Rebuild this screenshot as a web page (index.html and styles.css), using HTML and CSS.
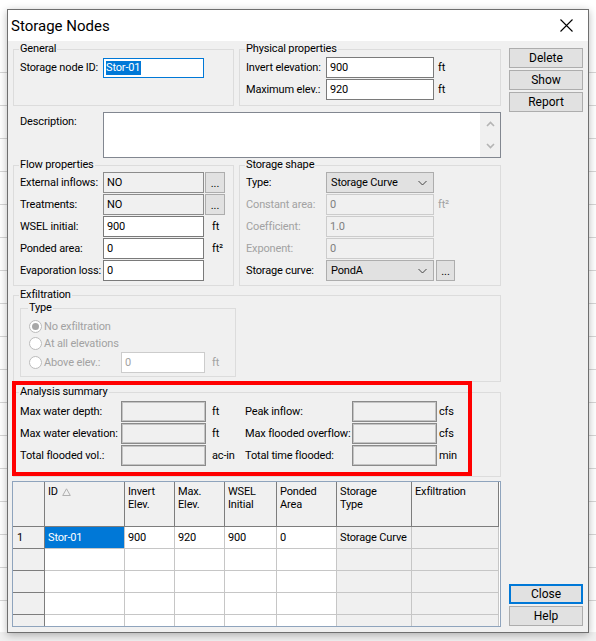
FILE: index.html
```html
<!DOCTYPE html>
<html lang="en">
<head>
<meta charset="utf-8">
<title>Storage Nodes</title>
<link rel="stylesheet" href="styles.css">
</head>
<body>
<div class="desktop">
  <div class="window">
    <div class="titlebar">
      <span class="title">Storage Nodes</span>
      <svg class="close-x" width="13" height="13" viewBox="0 0 13 13" aria-hidden="true">
        <path d="M0.5 0.5L12.5 12.5M12.5 0.5L0.5 12.5" stroke="#000" stroke-width="1.1" fill="none"/>
      </svg>
    </div>

    <div class="dialog">
      <div class="main">

        <div class="row-pair top-pair">
          <fieldset class="group general">
            <legend>General</legend>
            <div class="fields cols-general">
              <span class="lbl">Storage node ID:</span>
              <div class="edit focused"><span class="sel">Stor-01</span></div>
            </div>
          </fieldset>
          <fieldset class="group physical">
            <legend>Physical properties</legend>
            <div class="fields cols-physical">
              <span class="lbl">Invert elevation:</span>
              <div class="edit">900</div>
              <span class="unit">ft</span>
              <span class="lbl">Maximum elev.:</span>
              <div class="edit">920</div>
              <span class="unit">ft</span>
            </div>
          </fieldset>
        </div>

        <div class="desc-row">
          <span class="lbl desc-lbl">Description:</span>
          <div class="memo">
            <div class="memo-text"></div>
            <div class="memo-scroll">
              <svg width="9" height="6" viewBox="0 0 9 6" aria-hidden="true"><path d="M1 5L4.5 1.5L8 5" stroke="#b4b4b4" stroke-width="1.6" fill="none"/></svg>
              <svg width="9" height="6" viewBox="0 0 9 6" aria-hidden="true"><path d="M1 1L4.5 4.5L8 1" stroke="#b4b4b4" stroke-width="1.6" fill="none"/></svg>
            </div>
          </div>
        </div>

        <div class="row-pair mid-pair">
          <fieldset class="group flow">
            <legend>Flow properties</legend>
            <div class="fields cols-flow">
              <span class="lbl">External inflows:</span>
              <div class="edit readonly">NO</div>
              <div class="dots flow-dots">...</div>

              <span class="lbl">Treatments:</span>
              <div class="edit readonly">NO</div>
              <div class="dots flow-dots">...</div>

              <span class="lbl">WSEL initial:</span>
              <div class="edit">900</div>
              <span class="unit flow-unit">ft</span>

              <span class="lbl">Ponded area:</span>
              <div class="edit">0</div>
              <span class="unit flow-unit">ft²</span>

              <span class="lbl">Evaporation loss:</span>
              <div class="edit">0</div>
              <span></span>
            </div>
          </fieldset>

          <fieldset class="group shape">
            <legend>Storage shape</legend>
            <div class="fields cols-shape">
              <span class="lbl">Type:</span>
              <div class="combo">
                <span>Storage Curve</span>
                <svg width="9" height="6" viewBox="0 0 9 6" aria-hidden="true"><path d="M0.5 1L4.5 5L8.5 1" stroke="#444" stroke-width="1" fill="none"/></svg>
              </div>
              <span></span>

              <span class="lbl dis">Constant area:</span>
              <div class="edit disabled">0</div>
              <span class="unit shape-unit dis">ft²</span>

              <span class="lbl dis">Coefficient:</span>
              <div class="edit disabled">1.0</div>
              <span></span>

              <span class="lbl dis">Exponent:</span>
              <div class="edit disabled">0</div>
              <span></span>

              <span class="lbl">Storage curve:</span>
              <div class="combo">
                <span>PondA</span>
                <svg width="9" height="6" viewBox="0 0 9 6" aria-hidden="true"><path d="M0.5 1L4.5 5L8.5 1" stroke="#444" stroke-width="1" fill="none"/></svg>
              </div>
              <div class="dots shape-dots">...</div>
            </div>
          </fieldset>
        </div>

        <fieldset class="group exfil">
          <legend>Exfiltration</legend>
          <fieldset class="group type">
            <legend>Type</legend>
            <div class="cols-type">
              <div class="radio dis"><span class="dot checked"></span>No exfiltration</div>
              <span></span><span></span>
              <div class="radio dis"><span class="dot"></span>At all elevations</div>
              <span></span><span></span>
              <div class="radio dis"><span class="dot"></span>Above elev.:</div>
              <div class="edit inactive">0</div>
              <span class="unit type-unit dis">ft</span>
            </div>
          </fieldset>
        </fieldset>

        <div class="summary-wrap">
          <fieldset class="group summary">
            <legend>Analysis summary</legend>
            <div class="fields cols-summary">
              <span class="lbl">Max water depth:</span>
              <div class="edit result"></div>
              <span class="unit sum-unit">ft</span>
              <span class="lbl">Peak inflow:</span>
              <div class="edit result"></div>
              <span class="unit sum-unit-r">cfs</span>

              <span class="lbl">Max water elevation:</span>
              <div class="edit result"></div>
              <span class="unit sum-unit">ft</span>
              <span class="lbl">Max flooded overflow:</span>
              <div class="edit result"></div>
              <span class="unit sum-unit-r">cfs</span>

              <span class="lbl">Total flooded vol.:</span>
              <div class="edit result"></div>
              <span class="unit sum-unit">ac-in</span>
              <span class="lbl">Total time flooded:</span>
              <div class="edit result"></div>
              <span class="unit sum-unit-r">min</span>
            </div>
          </fieldset>
          <div class="highlight-box"></div>
        </div>

        <div class="grid">
          <div class="gh"></div>
          <div class="gh">ID <svg class="sort" width="9" height="8" viewBox="0 0 9 8" aria-hidden="true"><path d="M4.5 0.8L8.3 7.5H0.7Z" stroke="#b0b0b0" stroke-width="1" fill="none"/></svg></div>
          <div class="gh">Invert<br>Elev.</div>
          <div class="gh">Max.<br>Elev.</div>
          <div class="gh">WSEL<br>Initial</div>
          <div class="gh">Ponded<br>Area</div>
          <div class="gh">Storage<br>Type</div>
          <div class="gh">Exfiltration</div>

          <div class="rh">1</div>
          <div class="gc current">Stor-01</div>
          <div class="gc">900</div>
          <div class="gc">920</div>
          <div class="gc">900</div>
          <div class="gc">0</div>
          <div class="gc ro">Storage Curve</div>
          <div class="gc ro"></div>

          <div class="rh"></div><div class="gc"></div><div class="gc"></div><div class="gc"></div><div class="gc"></div><div class="gc"></div><div class="gc ro"></div><div class="gc ro"></div>
          <div class="rh"></div><div class="gc"></div><div class="gc"></div><div class="gc"></div><div class="gc"></div><div class="gc"></div><div class="gc ro"></div><div class="gc ro"></div>
          <div class="rh"></div><div class="gc"></div><div class="gc"></div><div class="gc"></div><div class="gc"></div><div class="gc"></div><div class="gc ro"></div><div class="gc ro"></div>
          <div class="rh"></div><div class="gc"></div><div class="gc"></div><div class="gc"></div><div class="gc"></div><div class="gc"></div><div class="gc ro"></div><div class="gc ro"></div>
        </div>
      </div>

      <div class="side">
        <div class="btn-stack">
          <div class="btn">Delete</div>
          <div class="btn">Show</div>
          <div class="btn">Report</div>
        </div>
        <div class="btn-stack">
          <div class="btn default">Close</div>
          <div class="btn">Help</div>
        </div>
      </div>
    </div>
  </div>
</div>
</body>
</html>
```

FILE: styles.css
```css
* {
  box-sizing: border-box;
}

html,
body {
  margin: 0;
  padding: 0;
}

body {
  width: 596px;
  height: 641px;
  overflow: hidden;
  font-family: Roboto, "Liberation Sans", sans-serif;
  font-size: 11px;
  letter-spacing: -0.15px;
  color: #000;
}

/* application window behind the dialog */
.desktop {
  position: relative;
  width: 596px;
  height: 641px;
  background:
    linear-gradient(#f0f0f0, #f0f0f0) 0 632px / 100% 9px no-repeat,
    repeating-linear-gradient(180deg, #fff 0, #fff 32px, #d6d6d6 32px, #d6d6d6 33px) 0 40px / 100% 592px no-repeat,
    #fff;
}

.window {
  position: absolute;
  left: 7px;
  top: 9px;
  width: 582px;
  height: 624px;
  border: 1px solid #6f6f6f;
  background: #f0f0f0;
  box-shadow: 0 2px 8px rgba(0, 0, 0, 0.28);
  display: flex;
  flex-direction: column;
}

.titlebar {
  flex: none;
  height: 31px;
  background: #fff;
  display: flex;
  align-items: center;
  justify-content: space-between;
  padding: 0 15px 0 3px;
}

.title {
  font-size: 15px;
  letter-spacing: 0;
}

.dialog {
  flex: 1;
  display: grid;
  grid-template-columns: 488px 74px;
  column-gap: 8px;
  padding: 1px 5px 5px 5px;
}

.main {
  display: flex;
  flex-direction: column;
  min-width: 0;
}

/* group boxes */
.group {
  margin: 0;
  min-width: 0;
  border: 1px solid #dcdcdc;
  padding: 0 6px 4px 6px;
}

.group > legend {
  padding: 0 1px;
  margin-left: -1px;
  line-height: 14px;
}

.row-pair {
  display: flex;
  gap: 5px;
}

.general,
.flow {
  width: 221px;
}

.physical,
.shape {
  width: 262px;
}

.top-pair .group {
  padding-bottom: 5px;
}

.fields {
  display: grid;
  grid-auto-rows: 21px;
  row-gap: 1px;
  align-items: center;
}

.cols-general {
  grid-template-columns: 83px 101px;
  padding-top: 1px;
}

.cols-general .edit {
  height: 20px;
  align-self: end;
}

.cols-physical {
  grid-template-columns: 80px 108px auto;
  padding-top: 1px;
}

.cols-flow {
  grid-template-columns: 83px 101px auto;
}

.cols-shape {
  grid-template-columns: 80px 108px auto;
}

.lbl {
  white-space: nowrap;
}

.dis {
  color: #a2a2a2;
}

/* edit boxes */
.edit {
  height: 21px;
  border: 1px solid #7a7a7a;
  background: #fff;
  padding: 0 3px;
  line-height: 19px;
  white-space: nowrap;
  overflow: hidden;
}

.edit.focused {
  border-color: #0078d7;
  padding-left: 2px;
  line-height: 18px;
}

.sel {
  background: #0078d7;
  color: #fff;
  display: inline-block;
  line-height: 14px;
  padding: 0 1px 0 0;
}

.edit.readonly {
  background: #f0f0f0;
  border-color: #8c8c8c;
}

.edit.disabled {
  background: #f0f0f0;
  border-color: #cccccc;
  color: #808080;
}

.edit.inactive {
  background: #fff;
  border-color: #cccccc;
  color: #a2a2a2;
}

.edit.result {
  background: #f0f0f0;
  border-color: #8a8a8a;
  box-shadow: inset 0 0 0 1px #c4c4c4;
}

.unit {
  white-space: nowrap;
  padding-left: 4px;
}

.flow-unit {
  padding-left: 8px;
}

.dots {
  height: 21px;
  border: 1px solid #adadad;
  background: #e1e1e1;
  text-align: center;
  line-height: 22px;
  letter-spacing: 0;
}

.flow-dots {
  width: 20px;
  margin-left: 1px;
}

.shape-dots {
  width: 19px;
  margin-left: 2px;
}

.combo {
  height: 21px;
  border: 1px solid #adadad;
  background: #e1e1e1;
  display: flex;
  align-items: center;
  justify-content: space-between;
  padding: 0 6px 0 4px;
}

/* description memo */
.desc-row {
  display: flex;
  margin-top: 6px;
  padding-left: 7px;
  height: 46px;
}

.desc-lbl {
  width: 83px;
  flex: none;
  padding-top: 3px;
}

.memo {
  flex: 1;
  border: 1px solid #828790;
  background: #fff;
  display: flex;
}

.memo-text {
  flex: 1;
}

.memo-scroll {
  width: 20px;
  background: #f0f0f0;
  display: flex;
  flex-direction: column;
  align-items: center;
  justify-content: space-around;
}

.memo-scroll svg {
  display: block;
}

/* exfiltration */
.exfil {
  margin-top: 3px;
  padding-bottom: 4px;
}

.exfil > legend {
  line-height: 12px;
}

.type {
  width: 216px;
  padding: 3px 8px 3px 8px;
}

.cols-type {
  display: grid;
  grid-template-columns: 92px 84px auto;
  grid-template-rows: 17px 17px 21px;
  align-items: center;
}

.radio {
  display: flex;
  align-items: center;
  gap: 2px;
  white-space: nowrap;
}

.dot {
  width: 13px;
  height: 13px;
  border-radius: 50%;
  border: 1px solid #bcbcbc;
  background: #fff;
  display: flex;
  align-items: center;
  justify-content: center;
}

.dot.checked::after {
  content: "";
  width: 7px;
  height: 7px;
  border-radius: 50%;
  background: #a8a8a8;
}

.type-unit {
  padding-left: 7px;
}

/* analysis summary */
.summary-wrap {
  position: relative;
  margin-top: 3px;
}

.summary {
  padding: 2px 6px 10px 6px;
}

.cols-summary {
  grid-template-columns: 101px 85px 39px 107px 85px auto;
}

.sum-unit {
  padding-left: 6px;
}

.sum-unit-r {
  padding-left: 2px;
}

.highlight-box {
  position: absolute;
  left: -1px;
  top: -4px;
  width: 460px;
  height: 95px;
  border: 4px solid #ff0000;
  pointer-events: none;
}

/* node table */
.grid {
  margin-top: 4px;
  margin-left: -1px;
  width: 489px;
  height: 146px;
  border: 1px solid #8fa4bd;
  padding-right: 1px;
  background: #fff;
  overflow: hidden;
  display: grid;
  grid-template-columns: 32px 80px 50px 50px 52px 60px 75px 87px;
  grid-template-rows: 45px repeat(5, 22px);
}

.gh {
  background: #f0f0f0;
  border-right: 1px solid #7d7d7d;
  border-bottom: 1px solid #7d7d7d;
  padding: 3px 3px 0;
  line-height: 13px;
  white-space: nowrap;
}

.sort {
  vertical-align: -1px;
  margin-left: 1px;
}

.rh {
  background: #f0f0f0;
  border-right: 1px solid #7d7d7d;
  border-bottom: 1px solid #7d7d7d;
  padding-left: 4px;
  line-height: 21px;
}

.gc {
  border-right: 1px solid #c6c6c6;
  border-bottom: 1px solid #c6c6c6;
  padding: 0 3px;
  line-height: 21px;
  white-space: nowrap;
  overflow: hidden;
}

.gc.ro {
  background: #f0f0f0;
}

.gc.current {
  background: #0078d7;
  color: #fff;
}

/* command buttons */
.side {
  display: flex;
  flex-direction: column;
  justify-content: space-between;
  padding: 6px 0 1px;
}

.btn-stack {
  display: flex;
  flex-direction: column;
  gap: 2px;
}

.btn {
  height: 20px;
  border: 1px solid #adadad;
  background: #e1e1e1;
  text-align: center;
  line-height: 18px;
  font-size: 12px;
  letter-spacing: 0;
}

.btn.default {
  border: 2px solid #0078d7;
  line-height: 16px;
}
```
